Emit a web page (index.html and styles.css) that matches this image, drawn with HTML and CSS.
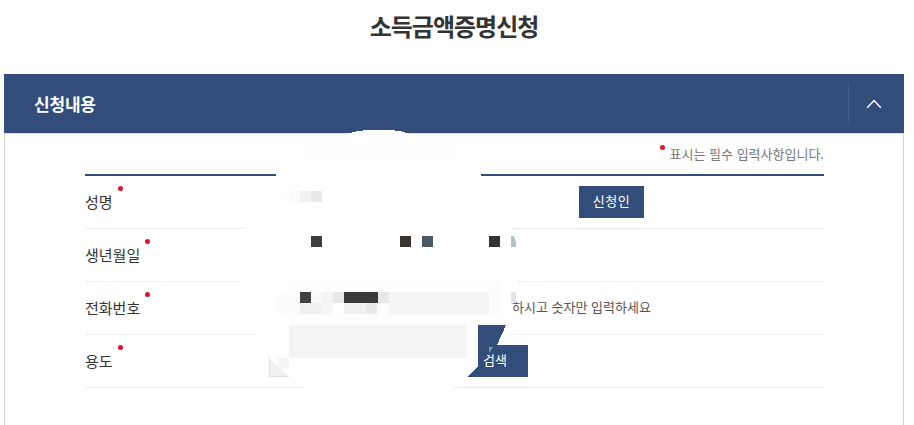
FILE: index.html
```html
<!DOCTYPE html>
<html lang="ko">
<head>
<meta charset="utf-8">
<title>소득금액증명신청</title>
<link rel="stylesheet" href="styles.css">
</head>
<body>
<main class="page">
  <h1 class="title">소득금액증명신청</h1>
  <section class="panel">
    <header class="panel-head">
      <h2 class="panel-title">신청내용</h2>
      <button class="toggle" type="button" aria-label="접기">
        <svg class="chevron" width="16" height="10" viewBox="0 0 16 10"><path d="M1.2 8.8 8 1.6l6.8 7.2" fill="none" stroke="#fff" stroke-width="1.5"/></svg>
      </button>
    </header>
    <div class="panel-body">
      <p class="notice"><span class="dot notice-dot"></span>표시는 필수 입력사항입니다.</p>
      <div class="form">
        <div class="row">
          <div class="label"><span>성명</span><span class="dot"></span></div>
          <div class="value value-name"><button class="btn btn-applicant" type="button">신청인</button></div>
        </div>
        <div class="row">
          <div class="label"><span>생년월일</span><span class="dot"></span></div>
          <div class="value"></div>
        </div>
        <div class="row">
          <div class="label"><span>전화번호</span><span class="dot"></span></div>
          <div class="value value-phone"><span class="hint">하시고 숫자만 입력하세요</span></div>
        </div>
        <div class="row">
          <div class="label"><span>용도</span><span class="dot"></span></div>
          <div class="value value-use"><button class="btn btn-search" type="button">검색</button></div>
        </div>
      </div>
    </div>
  </section>
</main>
<svg class="redaction" width="914" height="425" viewBox="0 0 914 425" shape-rendering="crispEdges" aria-hidden="true">
  <polygon fill="#fff" points="347,134 358,131 367,130 390,130 400,131 410,134 460,150 481,173 481,178 512,226 512,230 517,279 517,283 510,296 508,332 508,336 478,345 453,385 453,390 304,390 304,385 255,336 255,332 240,283 240,279 245,230 245,226 276,178 276,173 300,150"/>
  <rect x="300" y="147" width="160" height="10" fill="#fffdfb"/>
  <rect x="278" y="191" width="11" height="11" fill="#fdfdfd"/>
  <rect x="289" y="191" width="11" height="11" fill="#fbfbfb"/>
  <rect x="300" y="191" width="11" height="11" fill="#f1f1f1"/>
  <rect x="311" y="191" width="11" height="11" fill="#e9e9e9"/>
  <rect x="311" y="236" width="11" height="11" fill="#3d3b3b"/>
  <rect x="400" y="236" width="11" height="11" fill="#3a3531"/>
  <rect x="422" y="236" width="11" height="11" fill="#4b5761"/>
  <rect x="489" y="236" width="11" height="11" fill="#333"/>
  <polygon points="511,236 514,236 516,243 516,247 511,247" fill="#b4c0cc"/>
  <rect x="289" y="281" width="211" height="11" fill="#fdfdfd"/>
  <rect x="278" y="292" width="222" height="22" fill="#fcfcfc"/>
  <rect x="289" y="314" width="200" height="11" fill="#fdfdfd"/>
  <rect x="300" y="292" width="11" height="11" fill="#414141"/>
  <rect x="311" y="292" width="11" height="11" fill="#f9f9f9"/>
  <rect x="322" y="292" width="11" height="11" fill="#f4f4f4"/>
  <rect x="333" y="292" width="11" height="11" fill="#e8e8e8"/>
  <rect x="344" y="292" width="34" height="11" fill="#3b3b3b"/>
  <rect x="378" y="292" width="11" height="11" fill="#e8e8e8"/>
  <rect x="389" y="292" width="100" height="22" fill="#f4f4f4"/>
  <rect x="300" y="303" width="22" height="11" fill="#f0f0f0"/>
  <rect x="322" y="303" width="11" height="11" fill="#f6f6f6"/>
  <rect x="333" y="303" width="11" height="11" fill="#fff"/>
  <rect x="344" y="303" width="22" height="11" fill="#f1f1f1"/>
  <rect x="366" y="303" width="11" height="11" fill="#e9e9e9"/>
  <rect x="378" y="303" width="11" height="11" fill="#fcfcfc"/>
  <rect x="511" y="292" width="5" height="11" fill="#e4e4e4"/>
  <rect x="289" y="325" width="178" height="33" fill="#f4f4f4"/>
  <polygon points="269,358 289,377 269,377" fill="#f1f1f1" shape-rendering="auto"/>
  <rect x="278" y="358" width="11" height="11" fill="#f5f5f5"/>
  <rect x="269" y="357" width="1" height="21" fill="#e0e0e0"/>
  <rect x="269" y="376" width="20" height="1" fill="#e0e0e0"/>
  <polygon points="478,325 506,325 497,345 478,366 468,377 478,377 478,345" fill="#334d7a"/>
  <polygon points="489,347 493,347 489,353" fill="#8e97a6" shape-rendering="auto"/>
</svg>
</body>
</html>
```
FILE: styles.css
```css
html, body {
  margin: 0;
  padding: 0;
  height: 425px;
  overflow: hidden;
  background: #fff;
}

body {
  position: relative;
  font-family: "Noto Sans CJK KR", "Noto Sans", sans-serif;
  color: #333;
}

.page {
  width: 900px;
  margin-left: 4px;
}

.title {
  margin: 0 0 22px;
  height: 52px;
  line-height: 52px;
  font-size: 24px;
  font-weight: 700;
  letter-spacing: -1px;
  text-align: center;
  color: #333;
}

.panel {
  box-sizing: border-box;
  height: 351px;
  border: 1px solid #d0d0d0;
  border-top: 0;
  border-bottom: 0;
}

.panel-head {
  display: flex;
  align-items: center;
  justify-content: space-between;
  height: 60px;
  margin: 0 -1px;
  padding: 0 0 1px 30px;
  background: #334d7a;
  border-bottom: 1px solid #d8dde6;
  box-sizing: border-box;
}

.panel-title {
  margin: 0;
  font-size: 17px;
  font-weight: 700;
  letter-spacing: -0.2px;
  color: #fff;
}

.toggle {
  display: flex;
  align-items: center;
  justify-content: center;
  width: 56px;
  height: 40px;
  padding: 2px 6px 0 0;
  background: none;
  border: 0;
  border-left: 1px solid #435c88;
}

.chevron {
  display: block;
}

.panel-body {
  margin: 0 79px 0 80px;
}

.notice {
  display: flex;
  justify-content: flex-end;
  align-items: flex-start;
  height: 40px;
  margin: 0;
  padding-top: 10px;
  box-sizing: border-box;
  font-size: 13px;
  line-height: 20px;
  color: #777;
}

.dot {
  display: inline-block;
  width: 5px;
  height: 5px;
  border-radius: 50%;
  background: #d9152d;
}

.notice-dot {
  margin: 1px 5px 0 0;
}

.form {
  border-top: 2px solid #334d7a;
}

.row {
  display: flex;
  align-items: center;
  box-sizing: border-box;
  height: 53px;
  border-bottom: 1px solid #eee;
}

.row:first-child {
  height: 52.5px;
}

.label {
  display: flex;
  align-items: flex-start;
  flex: 0 0 204px;
  font-size: 15px;
  line-height: 20px;
  color: #333;
}

.label .dot {
  margin: -6px 0 0 5px;
}

.value {
  display: flex;
  align-items: center;
}

.btn {
  height: 32px;
  padding: 0 0 2px;
  border: 0;
  background: #334d7a;
  color: #fff;
  font-family: inherit;
  font-size: 13px;
}

.btn-applicant {
  width: 65px;
  margin-left: 290px;
  letter-spacing: 0.5px;
}

.hint {
  margin: -2px 0 0 223px;
  font-size: 13px;
  color: #555;
}

.btn-search {
  width: 50px;
  margin-left: 189px;
  padding-left: 5px;
  text-align: left;
}

.redaction {
  position: absolute;
  left: 0;
  top: 0;
}
```
